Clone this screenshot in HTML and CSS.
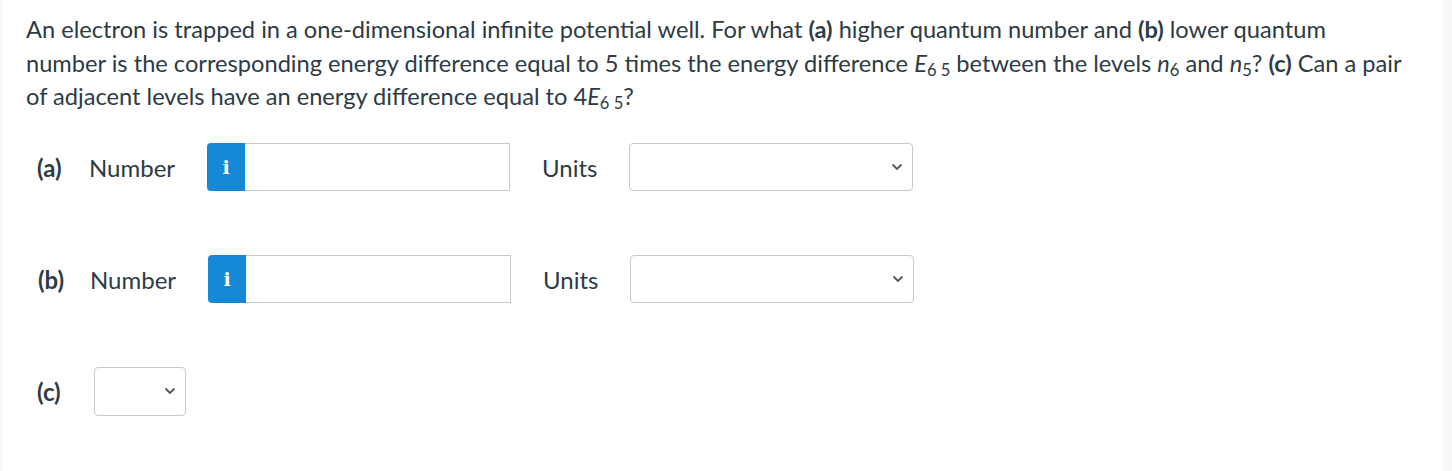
FILE: index.html
```html
<!DOCTYPE html>
<html>
<head>
<meta charset="utf-8">
<link rel="stylesheet" href="styles.css">
</head>
<body>
<div class="page">
  <p class="question">An electron is trapped in a one-dimensional infinite potential well. For what <b>(a)</b> higher quantum number and <b>(b)</b> lower quantum number is the corresponding energy difference equal to 5 times the energy difference <i>E</i><sub>6 5</sub> between the levels <i>n</i><sub>6</sub> and <i>n</i><sub>5</sub>? <b>(c)</b> Can a pair of adjacent levels have an energy difference equal to 4<i>E</i><sub>6 5</sub>?</p>

  <div class="row">
    <span class="part">(a)</span>
    <span class="lbl">Number</span>
    <span class="info">i</span>
    <input class="num" type="text">
    <span class="units">Units</span>
    <div class="sel-wrap wide">
      <select class="sel"><option></option></select>
      <svg class="chev" width="12" height="8" viewBox="0 0 12 8"><path d="M1.5 1.5 L6 6 L10.5 1.5" fill="none" stroke="#555" stroke-width="1.8"/></svg>
    </div>
  </div>

  <div class="row row-b">
    <span class="part">(b)</span>
    <span class="lbl">Number</span>
    <span class="info">i</span>
    <input class="num" type="text">
    <span class="units">Units</span>
    <div class="sel-wrap wide">
      <select class="sel"><option></option></select>
      <svg class="chev" width="12" height="8" viewBox="0 0 12 8"><path d="M1.5 1.5 L6 6 L10.5 1.5" fill="none" stroke="#555" stroke-width="1.8"/></svg>
    </div>
  </div>

  <div class="row row-c">
    <span class="part part-c">(c)</span>
    <div class="sel-wrap small">
      <select class="sel"><option></option></select>
      <svg class="chev" width="12" height="8" viewBox="0 0 12 8"><path d="M1.5 1.5 L6 6 L10.5 1.5" fill="none" stroke="#555" stroke-width="1.8"/></svg>
    </div>
  </div>
</div>
</body>
</html>
```
FILE: styles.css
```css
html, body {
  margin: 0;
  padding: 0;
  background: #f8f8f8;
}
body {
  font-family: Lato, "Open Sans", sans-serif;
  color: #2d3b45;
}
.page {
  margin-left: 3px;
  width: 1440px;
  height: 471px;
  background: #ffffff;
  box-sizing: border-box;
  padding: 13px 0 0 23px;
}
.question {
  margin: 0;
  width: 1384px;
  font-size: 23.65px;
  line-height: 33.5px;
}
.question b { font-weight: 700; }
.question sub {
  font-size: 16.5px;
  vertical-align: -4px;
  line-height: 0;
}
.row {
  display: flex;
  align-items: center;
  height: 48px;
  margin-top: 29.5px;
  font-size: 24px;
}
.row-b { margin-top: 64px; margin-left: 1px; }
.row-c { margin-top: 64px; height: 49px; }
.part {
  font-weight: 700;
  width: 52px;
  margin-left: 11px;
}
.part-c { width: 57px; }
.lbl { width: 118px; }
.info {
  width: 38px;
  height: 48px;
  background: #1589d8;
  color: #fff;
  border-radius: 4px 0 0 4px;
  display: flex;
  align-items: center;
  justify-content: center;
  font-family: "DejaVu Serif", serif;
  font-weight: 700;
  font-size: 19px;
}
.num {
  width: 265px;
  height: 48px;
  box-sizing: border-box;
  border: 1px solid #c8c8c8;
  border-left: none;
  margin: 0;
  padding: 0 8px;
  outline: none;
}
.units {
  margin-left: 32px;
  width: 87px;
}
.sel-wrap {
  position: relative;
  height: 48px;
}
.wide { width: 284px; }
.small { width: 92px; height: 49px; }
.sel {
  appearance: none;
  -webkit-appearance: none;
  width: 100%;
  height: 100%;
  box-sizing: border-box;
  border: 1px solid #c8c8c8;
  border-radius: 4px;
  background: #fff;
  margin: 0;
}
.chev {
  position: absolute;
  right: 10px;
  top: 20px;
  pointer-events: none;
}
```
